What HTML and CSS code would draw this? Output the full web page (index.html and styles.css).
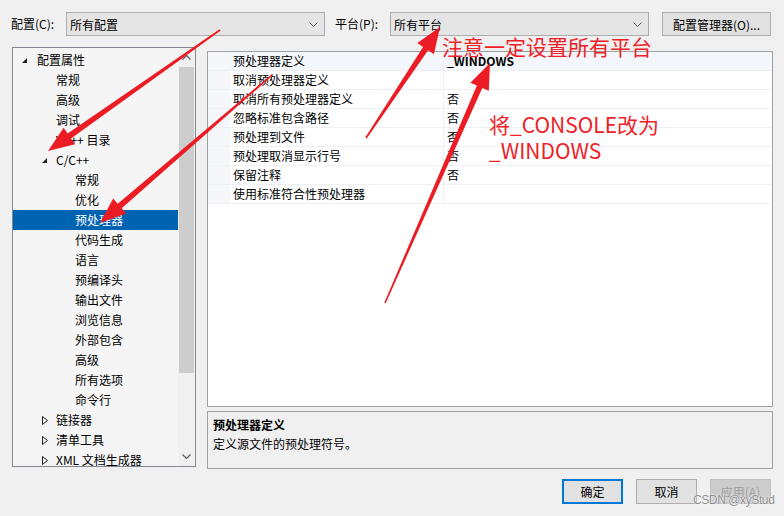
FILE: index.html
```html
<!DOCTYPE html>
<html lang="zh-CN">
<head>
    <meta charset="UTF-8">
    <title>属性页</title>
    <link rel="stylesheet" href="styles.css">
</head>
<body>
    <div class="dialog">
        <div class="toolbar">
            <span class="tb-label">配置(C):</span>
            <div class="combo">
                <span>所有配置</span>
                <svg class="chev" width="9" height="5" viewBox="0 0 9 5"><polyline points="0.5,0.5 4.5,4.5 8.5,0.5" fill="none" stroke="#5a5a5a" stroke-width="1"/></svg>
            </div>
            <span class="tb-label tb-gap">平台(P):</span>
            <div class="combo">
                <span>所有平台</span>
                <svg class="chev" width="9" height="5" viewBox="0 0 9 5"><polyline points="0.5,0.5 4.5,4.5 8.5,0.5" fill="none" stroke="#5a5a5a" stroke-width="1"/></svg>
            </div>
            <button class="btn btn-manager">配置管理器(O)...</button>
        </div>

        <div class="main">
            <div class="tree">
                <ul class="tree-list">
                    <li class="node lvl0"><svg class="tri" width="5" height="5" viewBox="0 0 5 5"><polygon points="5,0 5,5 0,5" fill="#1e1e1e"/></svg>配置属性</li>
                    <li class="node lvl1">常规</li>
                    <li class="node lvl1">高级</li>
                    <li class="node lvl1">调试</li>
                    <li class="node lvl1">VC++ 目录</li>
                    <li class="node lvl1"><svg class="tri" width="5" height="5" viewBox="0 0 5 5"><polygon points="5,0 5,5 0,5" fill="#1e1e1e"/></svg>C/C++</li>
                    <li class="node lvl2">常规</li>
                    <li class="node lvl2">优化</li>
                    <li class="node lvl2 selected">预处理器</li>
                    <li class="node lvl2">代码生成</li>
                    <li class="node lvl2">语言</li>
                    <li class="node lvl2">预编译头</li>
                    <li class="node lvl2">输出文件</li>
                    <li class="node lvl2">浏览信息</li>
                    <li class="node lvl2">外部包含</li>
                    <li class="node lvl2">高级</li>
                    <li class="node lvl2">所有选项</li>
                    <li class="node lvl2">命令行</li>
                    <li class="node lvl1"><svg class="tri-c" width="6" height="9" viewBox="0 0 6 9"><polygon points="0.5,0.5 5.5,4.5 0.5,8.5" fill="none" stroke="#1e1e1e" stroke-width="1"/></svg>链接器</li>
                    <li class="node lvl1"><svg class="tri-c" width="6" height="9" viewBox="0 0 6 9"><polygon points="0.5,0.5 5.5,4.5 0.5,8.5" fill="none" stroke="#1e1e1e" stroke-width="1"/></svg>清单工具</li>
                    <li class="node lvl1"><svg class="tri-c" width="6" height="9" viewBox="0 0 6 9"><polygon points="0.5,0.5 5.5,4.5 0.5,8.5" fill="none" stroke="#1e1e1e" stroke-width="1"/></svg>XML 文档生成器</li>
                </ul>
                <div class="vscroll">
                    <div class="sb-arrow">
                        <svg width="9" height="5" viewBox="0 0 9 5"><polyline points="0.5,4.5 4.5,0.5 8.5,4.5" fill="none" stroke="#606060" stroke-width="1.2"/></svg>
                    </div>
                    <div class="sb-track"><div class="sb-thumb"></div></div>
                    <div class="sb-arrow">
                        <svg width="9" height="5" viewBox="0 0 9 5"><polyline points="0.5,0.5 4.5,4.5 8.5,0.5" fill="none" stroke="#606060" stroke-width="1.2"/></svg>
                    </div>
                </div>
            </div>

            <div class="right">
                <div class="grid">
                    <div class="row current"><div class="gutter"></div><div class="name">预处理器定义</div><div class="value bold">_WINDOWS</div></div>
                    <div class="row"><div class="gutter"></div><div class="name">取消预处理器定义</div><div class="value"></div></div>
                    <div class="row"><div class="gutter"></div><div class="name">取消所有预处理器定义</div><div class="value">否</div></div>
                    <div class="row"><div class="gutter"></div><div class="name">忽略标准包含路径</div><div class="value">否</div></div>
                    <div class="row"><div class="gutter"></div><div class="name">预处理到文件</div><div class="value">否</div></div>
                    <div class="row"><div class="gutter"></div><div class="name">预处理取消显示行号</div><div class="value">否</div></div>
                    <div class="row"><div class="gutter"></div><div class="name">保留注释</div><div class="value">否</div></div>
                    <div class="row"><div class="gutter"></div><div class="name">使用标准符合性预处理器</div><div class="value"></div></div>
                </div>
                <div class="desc">
                    <div class="desc-title">预处理器定义</div>
                    <div class="desc-text">定义源文件的预处理符号。</div>
                </div>
            </div>
        </div>

        <div class="footer">
            <button class="btn btn-ok">确定</button>
            <button class="btn">取消</button>
            <button class="btn btn-disabled">应用(A)</button>
        </div>
    </div>

    <!-- red annotations drawn on top of the screenshot -->
    <svg class="annot" width="784" height="516" viewBox="0 0 784 516">
        <g fill="#ec1c24">
            <polygon points="219.5,29.3 67.6,133.5 63.6,127.8 48,151 75.1,144.2 71.0,138.5 220.5,30.7"/>
            <polygon points="271.5,74.4 117.7,203.7 113.2,198.4 100,223 126.2,213.6 121.7,208.3 272.5,75.6"/>
            <polygon points="366.7,138.4 428.1,50.3 433.9,54.2 440,27 417.3,43.1 423.1,46.9 365.3,137.6"/>
            <polygon points="385.7,303.3 482.3,88.0 488.8,90.8 490,63 470.4,82.8 476.9,85.6 384.3,302.7"/>
        </g>
    </svg>
    <div class="note note-top">注意一定设置所有平台</div>
    <div class="note note-mid">将_CONSOLE改为<br>_WINDOWS</div>
    <div class="watermark">CSDN @xyStud</div>
</body>
</html>
```

FILE: styles.css
```css
body {
    margin: 0;
    width: 784px;
    height: 516px;
    background: #f0f0f0;
    font-family: "Noto Sans CJK SC", "Microsoft YaHei", sans-serif;
    font-size: 12px;
    color: #000;
    position: relative;
    overflow: hidden;
}
.dialog {
    width: 784px;
    height: 516px;
}
.toolbar {
    display: flex;
    align-items: center;
    padding: 12px 0 0 11px;
    height: 24px;
}
.tb-label {
    width: 55px;
    line-height: 24px;
}
.tb-gap {
    margin-left: 10px;
}
.combo {
    box-sizing: border-box;
    width: 259px;
    height: 24px;
    background: #e5e5e5;
    border: 1px solid #adadad;
    display: flex;
    align-items: center;
    justify-content: space-between;
    padding: 0 6px 0 3px;
}
.chev {
    display: block;
}
.btn {
    box-sizing: border-box;
    height: 25px;
    width: 61px;
    background: #e1e1e1;
    border: 1px solid #adadad;
    font-family: inherit;
    font-size: 12px;
    color: #000;
    padding: 0;
}
.btn-manager {
    width: 109px;
    height: 24px;
    margin-left: 13px;
}
.main {
    display: flex;
    align-items: flex-start;
    margin-top: 11px;
}
.tree {
    box-sizing: border-box;
    width: 184px;
    height: 420px;
    margin-left: 12px;
    border: 1px solid #828790;
    background: #f5f5f5;
    display: flex;
    overflow: hidden;
}
.tree-list {
    list-style: none;
    margin: 0;
    padding: 2px 0 0;
    width: 165px;
    flex: none;
}
.node {
    height: 20px;
    line-height: 20px;
    white-space: nowrap;
    position: relative;
}
.lvl0 { padding-left: 24px; }
.lvl1 { padding-left: 43px; }
.lvl2 { padding-left: 62px; }
.node .tri {
    position: absolute;
    top: 8px;
    left: 9px;
}
.lvl1 .tri { left: 29px; }
.node .tri-c {
    position: absolute;
    top: 6px;
    left: 29px;
}
.node.selected {
    background: #0063b1;
    color: #fff;
}
.vscroll {
    width: 17px;
    flex: none;
    background: #f0f0f0;
    display: flex;
    flex-direction: column;
}
.sb-arrow {
    height: 19px;
    display: flex;
    align-items: center;
    justify-content: center;
}
.sb-track {
    flex: 1;
    padding: 0 1px;
}
.sb-thumb {
    height: 306px;
    background: #cdcdcd;
}
.right {
    width: 566px;
    margin-left: 11px;
    margin-top: 4px;
}
.grid {
    box-sizing: border-box;
    height: 356px;
    background: #fff;
    border: 1px solid #a0a0a0;
}
.row {
    display: flex;
    height: 19px;
    box-sizing: border-box;
    border-bottom: 1px solid #f0f0f4;
    line-height: 18px;
}
.gutter {
    width: 22px;
    background: #f5f7fa;
}
.name {
    width: 214px;
    box-sizing: border-box;
    padding-left: 3px;
    border-right: 1px solid #f0f0f4;
    white-space: nowrap;
}
.value {
    flex: 1;
    padding-left: 3px;
}
.bold {
    font-weight: bold;
}
.row.current .name,
.row.current .value {
    background: #f3f6fb;
}
.desc {
    box-sizing: border-box;
    height: 58px;
    margin-top: 4px;
    border: 1px solid #a0a0a0;
    background: #f0f0f0;
    padding: 3px 5px;
    line-height: 19px;
}
.desc-title {
    font-weight: bold;
}
.footer {
    display: flex;
    justify-content: flex-end;
    gap: 13px;
    padding-right: 13px;
    margin-top: 10px;
}
.btn-ok {
    border: 2px solid #0078d7;
}
.btn-disabled {
    background: #cccccc;
    border-color: #bfbfbf;
    color: #a0a0a0;
}
.annot {
    position: absolute;
    left: 0;
    top: 0;
    pointer-events: none;
}
.note {
    position: absolute;
    color: #ee2128;
    font-size: 21px;
    line-height: 26px;
    white-space: nowrap;
}
.note-top {
    left: 442px;
    top: 33px;
}
.note-mid {
    left: 489px;
    top: 111px;
}
.watermark {
    position: absolute;
    left: 693px;
    top: 493px;
    white-space: nowrap;
    font-family: "Liberation Sans", Arial, sans-serif;
    font-size: 12px;
    letter-spacing: -0.4px;
    color: #8e8e8e;
    text-shadow: 0 0 1px #fff, 0 0 2px #fff;
}
```
